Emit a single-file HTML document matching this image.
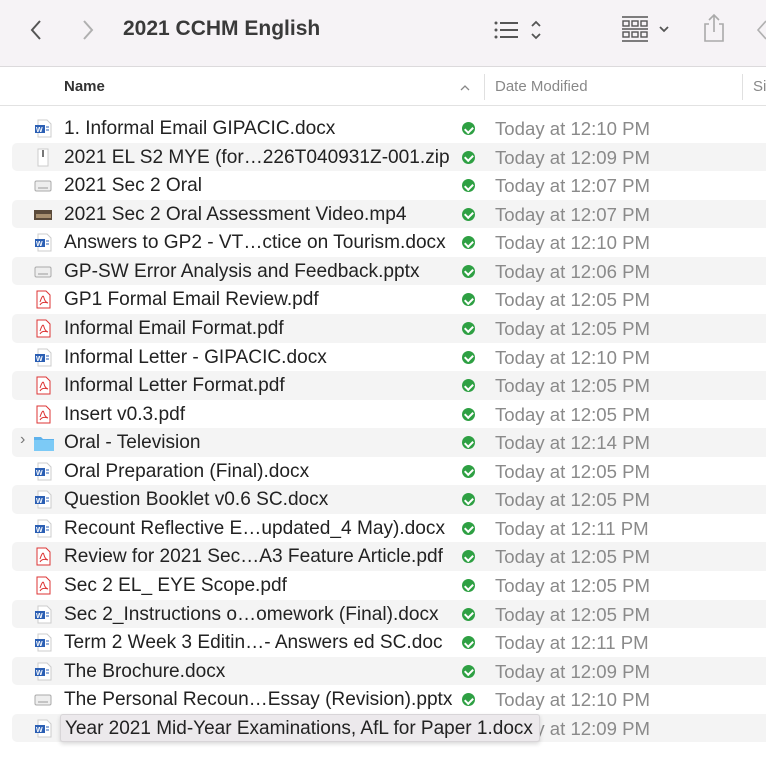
<!DOCTYPE html>
<html><head><meta charset="utf-8"><style>
*{margin:0;padding:0;box-sizing:border-box}
body{width:766px;height:768px;overflow:hidden;background:#fff;font-family:"Liberation Sans",sans-serif;position:relative}
.tb{position:absolute;left:0;top:0;width:766px;height:67px;background:#f6f3f6;border-bottom:1px solid #dcdadc}
.title{position:absolute;left:123px;top:17px;font-size:21px;font-weight:bold;color:#3a3a3a}
.hdr{position:absolute;left:0;top:68px;width:766px;height:38px;border-bottom:1px solid #e2e2e2;font-size:15px}
.rows{position:absolute;left:0;top:114px;width:766px}
.r{position:relative;height:28.57px;font-size:19.1px;color:#222}
.r.s{background:#f4f4f4;margin-left:12px;border-radius:5px 0 0 5px}
.r.s .ic{left:22px}.r.s .n{left:52px}.r.s .c{left:450px}.r.s .d{left:483px}.r.s .ch{left:8px}
.ic{position:absolute;left:34px;top:5px;width:18px;height:19px}
.n{position:absolute;left:64px;top:4px;white-space:nowrap}
.c{position:absolute;left:462px;top:8px;width:13px;height:13px;border-radius:50%;background:#2ea043}
.c:after{content:"";position:absolute;left:3.5px;top:2.5px;width:3.5px;height:6px;border-right:2px solid #fff;border-bottom:2px solid #fff;transform:rotate(45deg)}
.d{position:absolute;left:495px;top:4px;color:#8a8a8a;white-space:nowrap;font-size:18.6px}
.ch{position:absolute;left:20px;top:3px;color:#777;font-size:16px}
.tip{position:absolute;left:60px;top:714px;width:480px;height:28px;background:#ece9ec;border:1px solid #d8d5d8;border-radius:3px;box-shadow:0 2px 4px rgba(0,0,0,.15);font-size:19px;color:#222;padding:3px 0 0 4px;white-space:nowrap;overflow:hidden}
</style></head><body>
<div class="tb">
<svg style="position:absolute;left:28px;top:18px" width="16" height="24"><path d="M12 3 L4 12 L12 21" stroke="#555" stroke-width="2" fill="none"/></svg>
<svg style="position:absolute;left:80px;top:18px" width="16" height="24"><path d="M4 3 L12 12 L4 21" stroke="#b0b0b0" stroke-width="2" fill="none"/></svg>
<div class="title">2021 CCHM English</div>
<svg style="position:absolute;left:494px;top:18px" width="50" height="24"><g fill="#555"><circle cx="2" cy="5" r="1.5"/><circle cx="2" cy="12" r="1.5"/><circle cx="2" cy="19" r="1.5"/><rect x="6" y="4" width="18" height="2"/><rect x="6" y="11" width="18" height="2"/><rect x="6" y="18" width="18" height="2"/></g><path d="M38 8 L42 4 L46 8 M38 16 L42 20 L46 16" stroke="#555" stroke-width="1.8" fill="none"/></svg>
<svg style="position:absolute;left:620px;top:15px" width="55" height="28"><g fill="none" stroke="#555" stroke-width="1.4"><line x1="2" y1="2" x2="28" y2="2"/><line x1="2" y1="14" x2="28" y2="14"/><line x1="2" y1="26" x2="28" y2="26"/><rect x="3" y="6" width="6" height="5"/><rect x="12" y="6" width="6" height="5"/><rect x="21" y="6" width="6" height="5"/><rect x="3" y="17" width="6" height="5"/><rect x="12" y="17" width="6" height="5"/><rect x="21" y="17" width="6" height="5"/></g><path d="M40 12 L44 16 L48 12" stroke="#555" stroke-width="1.8" fill="none"/></svg>
<svg style="position:absolute;left:702px;top:13px" width="24" height="30"><path d="M7 11 H3 V28 H21 V11 H17 M12 19 V2 M7 7 L12 2 L17 7" stroke="#aaa" stroke-width="1.6" fill="none"/></svg>
<svg style="position:absolute;left:754px;top:18px" width="12" height="24"><path d="M12 3 L4 12 L12 21" stroke="#b0b0b0" stroke-width="1.6" fill="none"/></svg>
</div>
<div class="hdr">
<div style="position:absolute;left:64px;top:10px;font-weight:bold;color:#333">Name</div>
<svg style="position:absolute;left:459px;top:15px" width="12" height="10"><path d="M2 7 L6 3 L10 7" stroke="#888" stroke-width="1.3" fill="none"/></svg>
<div style="position:absolute;left:484px;top:6px;width:1px;height:26px;background:#e0e0e0"></div>
<div style="position:absolute;left:495px;top:10px;color:#888">Date Modified</div>
<div style="position:absolute;left:742px;top:6px;width:1px;height:26px;background:#e0e0e0"></div>
<div style="position:absolute;left:753px;top:10px;color:#888">Si</div>
</div>
<svg width="0" height="0" style="position:absolute"><defs>
<g id="w"><path d="M4 1 H13 L17 5 V18 H4 Z" fill="#fff" stroke="#ccc"/><rect x="1" y="6" width="10" height="8" fill="#2b5fb4"/><text x="2" y="13" font-size="7" fill="#fff" font-family="Liberation Sans" font-weight="bold">W</text><path d="M12 8 H15 M12 11 H15" stroke="#2b5fb4"/></g>
<g id="f"><path d="M3 1 H12 L16 5 V18 H3 Z" fill="#fff" stroke="#d33"/><path d="M6 12 Q9 3 10 8 Q11 12 14 13 Q8 11 6 15" stroke="#d33" fill="none"/></g>
<g id="p"><rect x="1" y="5" width="16" height="10" rx="1.5" fill="#eee" stroke="#aaa"/><line x1="4" y1="12" x2="14" y2="12" stroke="#999"/></g>
<g id="z"><path d="M4 1 H14 V18 H4 Z" fill="#fff" stroke="#ccc"/><rect x="8" y="2" width="2" height="7" fill="#777"/></g>
<g id="v"><rect x="0" y="5" width="19" height="10" fill="#5a4a3a"/><rect x="2" y="9" width="15" height="4" fill="#a89070"/></g>
<g id="d"><path d="M0 4 H7 L9 6 H20 V18 H0 Z" fill="#5eb2ec"/><rect x="0" y="7" width="20" height="11" fill="#7ccaf6"/></g>
</defs></svg>
<div class="rows">
<div class="r"><svg class="ic"><use href="#w"/></svg><span class="n">1. Informal Email GIPACIC.docx</span><span class="c"></span><span class="d">Today at 12:10 PM</span></div>
<div class="r s"><svg class="ic"><use href="#z"/></svg><span class="n">2021 EL S2 MYE (for…226T040931Z-001.zip</span><span class="c"></span><span class="d">Today at 12:09 PM</span></div>
<div class="r"><svg class="ic"><use href="#p"/></svg><span class="n">2021 Sec 2 Oral</span><span class="c"></span><span class="d">Today at 12:07 PM</span></div>
<div class="r s"><svg class="ic"><use href="#v"/></svg><span class="n">2021 Sec 2 Oral Assessment Video.mp4</span><span class="c"></span><span class="d">Today at 12:07 PM</span></div>
<div class="r"><svg class="ic"><use href="#w"/></svg><span class="n">Answers to GP2 - VT…ctice on Tourism.docx</span><span class="c"></span><span class="d">Today at 12:10 PM</span></div>
<div class="r s"><svg class="ic"><use href="#p"/></svg><span class="n">GP-SW Error Analysis and Feedback.pptx</span><span class="c"></span><span class="d">Today at 12:06 PM</span></div>
<div class="r"><svg class="ic"><use href="#f"/></svg><span class="n">GP1 Formal Email Review.pdf</span><span class="c"></span><span class="d">Today at 12:05 PM</span></div>
<div class="r s"><svg class="ic"><use href="#f"/></svg><span class="n">Informal Email Format.pdf</span><span class="c"></span><span class="d">Today at 12:05 PM</span></div>
<div class="r"><svg class="ic"><use href="#w"/></svg><span class="n">Informal Letter - GIPACIC.docx</span><span class="c"></span><span class="d">Today at 12:10 PM</span></div>
<div class="r s"><svg class="ic"><use href="#f"/></svg><span class="n">Informal Letter Format.pdf</span><span class="c"></span><span class="d">Today at 12:05 PM</span></div>
<div class="r"><svg class="ic"><use href="#f"/></svg><span class="n">Insert v0.3.pdf</span><span class="c"></span><span class="d">Today at 12:05 PM</span></div>
<div class="r s"><span class="ch">&#8250;</span><svg class="ic" style="width:22px"><use href="#d"/></svg><span class="n">Oral - Television</span><span class="c"></span><span class="d">Today at 12:14 PM</span></div>
<div class="r"><svg class="ic"><use href="#w"/></svg><span class="n">Oral Preparation (Final).docx</span><span class="c"></span><span class="d">Today at 12:05 PM</span></div>
<div class="r s"><svg class="ic"><use href="#w"/></svg><span class="n">Question Booklet v0.6 SC.docx</span><span class="c"></span><span class="d">Today at 12:05 PM</span></div>
<div class="r"><svg class="ic"><use href="#w"/></svg><span class="n">Recount Reflective E…updated_4 May).docx</span><span class="c"></span><span class="d">Today at 12:11 PM</span></div>
<div class="r s"><svg class="ic"><use href="#f"/></svg><span class="n">Review for 2021 Sec…A3 Feature Article.pdf</span><span class="c"></span><span class="d">Today at 12:05 PM</span></div>
<div class="r"><svg class="ic"><use href="#f"/></svg><span class="n">Sec 2 EL_ EYE Scope.pdf</span><span class="c"></span><span class="d">Today at 12:05 PM</span></div>
<div class="r s"><svg class="ic"><use href="#w"/></svg><span class="n">Sec 2_Instructions o…omework (Final).docx</span><span class="c"></span><span class="d">Today at 12:05 PM</span></div>
<div class="r"><svg class="ic"><use href="#w"/></svg><span class="n">Term 2 Week 3 Editin…- Answers ed SC.doc</span><span class="c"></span><span class="d">Today at 12:11 PM</span></div>
<div class="r s"><svg class="ic"><use href="#w"/></svg><span class="n">The Brochure.docx</span><span class="c"></span><span class="d">Today at 12:09 PM</span></div>
<div class="r"><svg class="ic"><use href="#p"/></svg><span class="n">The Personal Recoun…Essay (Revision).pptx</span><span class="c"></span><span class="d">Today at 12:10 PM</span></div>
<div class="r s"><svg class="ic"><use href="#w"/></svg><span class="d">Today at 12:09 PM</span></div>
</div>
<div class="tip">Year 2021 Mid-Year Examinations, AfL for Paper 1.docx</div>
</body></html>
